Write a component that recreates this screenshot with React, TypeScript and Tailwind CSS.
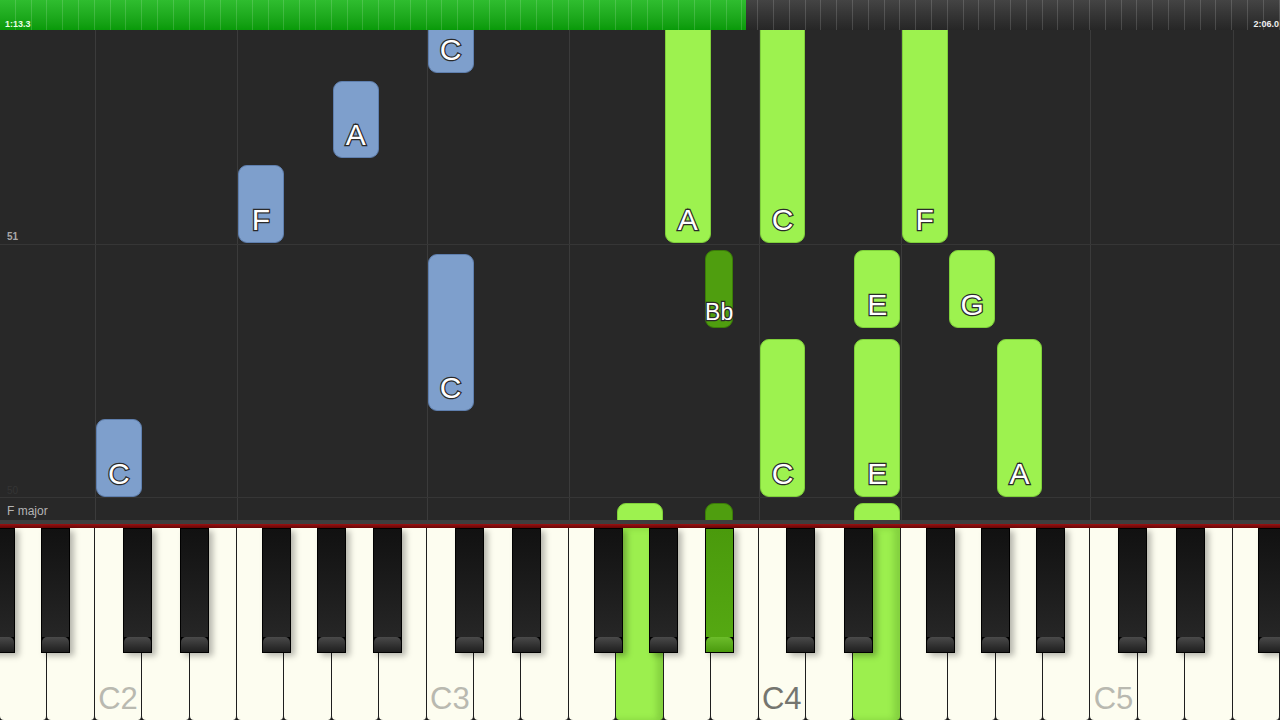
import React from 'react'

const W = 1280 / 27
const NAMES = ['A', 'B', 'C', 'D', 'E', 'F', 'G']
const OFFSET: Record<string, number> = { C: -5, D: 5, F: -8, G: 0, A: 8 }

type Note = {
  key: number
  black?: boolean
  top: number
  height: number
  color: 'blue' | 'green' | 'dark'
  label?: string
}

const notes: Note[] = [
  { key: 9, top: -12, height: 55, color: 'blue', label: 'C' },
  { key: 7, top: 51, height: 77, color: 'blue', label: 'A' },
  { key: 5, top: 135, height: 78, color: 'blue', label: 'F' },
  { key: 14, top: -20, height: 233, color: 'green', label: 'A' },
  { key: 16, top: -20, height: 233, color: 'green', label: 'C' },
  { key: 19, top: -20, height: 233, color: 'green', label: 'F' },
  { key: 9, top: 224, height: 157, color: 'blue', label: 'C' },
  { key: 14, black: true, top: 220, height: 78, color: 'dark', label: 'Bb' },
  { key: 18, top: 220, height: 78, color: 'green', label: 'E' },
  { key: 20, top: 220, height: 78, color: 'green', label: 'G' },
  { key: 16, top: 309, height: 158, color: 'green', label: 'C' },
  { key: 18, top: 309, height: 158, color: 'green', label: 'E' },
  { key: 21, top: 309, height: 158, color: 'green', label: 'A' },
  { key: 2, top: 389, height: 78, color: 'blue', label: 'C' },
  { key: 13, top: 473, height: 40, color: 'green' },
  { key: 14, black: true, top: 473, height: 40, color: 'dark' },
  { key: 18, top: 473, height: 40, color: 'green' },
]

const noteColors = {
  blue: 'bg-[#7e9fcc] border-[#5f7fae]',
  green: 'bg-[#9df24f] border-[#7fd03a]',
  dark: 'bg-[#4f9e0f] border-[#3b7c08]',
}

// black keys sit on the boundary after the white key with this index
const blackKeys: { boundary: number; offset: number; afterKey: number }[] = [
  { boundary: 0, offset: 0, afterKey: -1 },
  ...Array.from({ length: 27 }, (_, i) => i)
    .filter((i) => NAMES[i % 7] in OFFSET)
    .map((i) => ({ boundary: (i + 1) * W, offset: OFFSET[NAMES[i % 7]], afterKey: i })),
]

const keyLabels: Record<number, { text: string; color: string }> = {
  2: { text: 'C2', color: 'text-[#b9b9b0]' },
  9: { text: 'C3', color: 'text-[#b9b9b0]' },
  16: { text: 'C4', color: 'text-[#75756f]' },
  23: { text: 'C5', color: 'text-[#b9b9b0]' },
}

const pressedWhite = [13, 18]
const pressedBlack = 14

const gridX = [2, 5, 9, 12, 16, 19, 23, 26].map((i) => i * W)

function TopBar() {
  return (
    <div className="relative h-[30px] shrink-0 flex">
      <div className="w-[746px] bg-gradient-to-b from-[#2fbd2f] to-[#089a08]" />
      <div className="flex-1 bg-gradient-to-b from-[#444444] to-[#262626]" />
      <div className="absolute inset-0 flex">
        {Array.from({ length: 81 }, (_, i) => (
          <div key={i} className="flex-1 border-r border-white/15" />
        ))}
      </div>
      <div className="absolute left-[5px] top-[18px] text-[9px] font-bold text-[#e8ffe8] font-['Liberation_Sans',sans-serif]">
        1:13.3
      </div>
      <div className="absolute right-[1px] top-[18px] text-[9px] font-bold text-[#eeeeee] whitespace-nowrap font-['Liberation_Sans',sans-serif]">
        2:06.0
      </div>
    </div>
  )
}

function NoteBlock({ n }: { n: Note }) {
  const left = n.black ? (n.key + 1) * W + 8 - 14 : n.key * W + 1
  const width = n.black ? 28 : W - 1.5
  return (
    <div
      className={`absolute rounded-[9px] border flex items-end justify-center ${noteColors[n.color]}`}
      style={{ left, top: n.top, width, height: n.height }}
    >
      {n.label && (
        <span
          className={`text-white font-['Liberation_Sans',sans-serif] leading-none [-webkit-text-stroke:2.5px_#2a2a2a] [paint-order:stroke_fill] ${
            n.label === 'Bb' ? 'text-[23px] mb-[3px]' : 'text-[30px] mb-[7px]'
          }`}
        >
          {n.label}
        </span>
      )}
    </div>
  )
}

function Timeline() {
  return (
    <div className="relative h-[490px] shrink-0 bg-[#282828] overflow-hidden">
      {gridX.map((x, i) => (
        <div key={i} className="absolute top-0 bottom-0 w-px bg-[#3b3b3b]" style={{ left: Math.round(x) }} />
      ))}
      <div className="absolute left-0 right-0 top-[214px] h-px bg-[#363636]" />
      <div className="absolute left-0 right-0 top-[467px] h-px bg-[#363636]" />
      <div className="absolute left-[7px] top-[199px] text-[10px] font-bold text-[#a8a8a8] font-['Liberation_Sans',sans-serif]">51</div>
      <div className="absolute left-[7px] top-[453px] text-[10px] text-[#353535] font-['Liberation_Sans',sans-serif]">50</div>
      <div className="absolute left-[7px] top-[472px] text-[12px] text-[#b4b4b4] font-['Liberation_Sans',sans-serif]">F major</div>
      {notes.map((n, i) => (
        <NoteBlock key={i} n={n} />
      ))}
    </div>
  )
}

function Keyboard() {
  return (
    <div className="flex flex-col flex-1">
      <div className="h-[4px] bg-[#3e3e3e]" />
      <div className="h-[4px] bg-gradient-to-b from-[#9a1212] to-[#6a0606]" />
      <div className="relative flex-1 flex bg-[#1a1a1a]">
        {Array.from({ length: 27 }, (_, i) => {
          const pressed = pressedWhite.includes(i)
          const label = keyLabels[i]
          return (
            <div
              key={i}
              className={`flex-1 border-r border-[#1e1e1e] rounded-b-[4px] flex items-end justify-center pb-[6px] ${
                pressed ? 'bg-[#9cef4e] shadow-[inset_-6px_0_6px_rgba(60,120,20,0.25)]' : 'bg-[#fdfdf0]'
              }`}
            >
              {label && (
                <span className={`text-[31px] leading-none font-['Liberation_Sans',sans-serif] ${label.color}`}>
                  {label.text}
                </span>
              )}
            </div>
          )
        })}
        {blackKeys.map((b, i) => {
          const pressed = b.afterKey === pressedBlack
          return (
            <div
              key={i}
              className="absolute top-0 h-[125px] w-[29px] bg-black p-px flex flex-col shadow-[4px_3px_6px_rgba(0,0,0,0.28)]"
              style={{ left: b.boundary + b.offset - 14.5 }}
            >
              <div
                className={`flex-1 ${
                  pressed ? 'bg-gradient-to-b from-[#4a9a0c] to-[#55a812]' : 'bg-gradient-to-b from-[#111111] to-[#262626]'
                }`}
              />
              <div
                className={`h-[15px] rounded-t-[5px] ${
                  pressed ? 'bg-gradient-to-b from-[#6cbd2a] to-[#4a9a0c]' : 'bg-gradient-to-b from-[#4a4a4a] to-[#1f1f1f]'
                }`}
              />
            </div>
          )
        })}
      </div>
    </div>
  )
}

export default function App() {
  return (
    <div className="w-[1280px] h-[720px] flex flex-col bg-[#282828] overflow-hidden">
      <TopBar />
      <Timeline />
      <Keyboard />
    </div>
  )
}
